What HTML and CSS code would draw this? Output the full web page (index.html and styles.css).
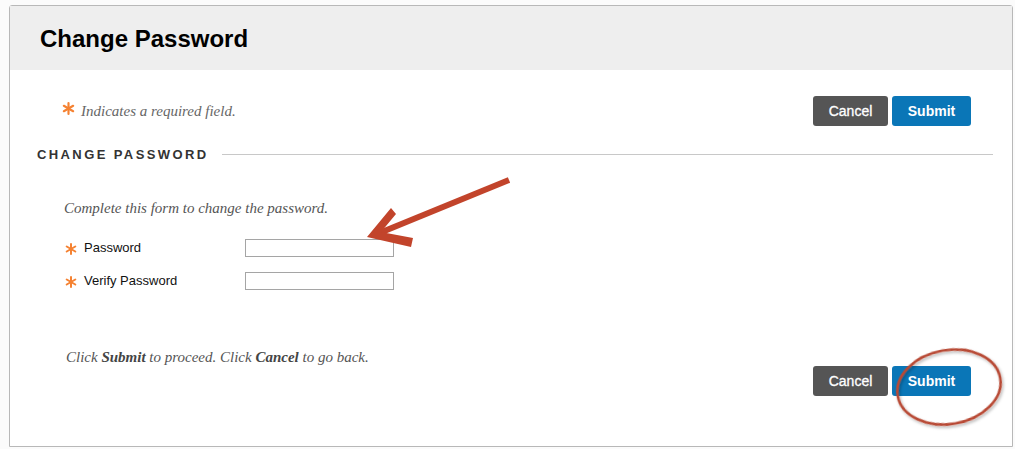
FILE: index.html
```html
<!DOCTYPE html>
<html>
<head>
<meta charset="utf-8">
<link rel="stylesheet" href="styles.css">
</head>
<body>
<div class="page">
  <div class="header"><h1 class="title">Change Password</h1></div>
  <div class="content">
    <div class="toprow">
      <div class="req">
        <svg class="star" viewBox="0 0 12 12" width="13" height="13"><g stroke="#f58232" stroke-width="2" stroke-linecap="round"><line x1="6" y1="1" x2="6" y2="11"/><line x1="1.7" y1="3.5" x2="10.3" y2="8.5"/><line x1="1.7" y1="8.5" x2="10.3" y2="3.5"/></g></svg>
        <span class="note">Indicates a required field.</span>
      </div>
      <div class="btns">
        <button class="btn cancel">Cancel</button>
        <button class="btn submit">Submit</button>
      </div>
    </div>
    <div class="section">
      <h2 class="sectitle">CHANGE PASSWORD</h2>
      <div class="rule"></div>
    </div>
    <p class="intro">Complete this form to change the password.</p>
    <div class="field">
      <div class="label"><svg class="star sm" viewBox="0 0 12 12" width="12" height="12"><g stroke="#f58232" stroke-width="2" stroke-linecap="round"><line x1="6" y1="1" x2="6" y2="11"/><line x1="1.7" y1="3.5" x2="10.3" y2="8.5"/><line x1="1.7" y1="8.5" x2="10.3" y2="3.5"/></g></svg>Password</div>
      <input class="inp" type="password">
    </div>
    <div class="field">
      <div class="label"><svg class="star sm" viewBox="0 0 12 12" width="12" height="12"><g stroke="#f58232" stroke-width="2" stroke-linecap="round"><line x1="6" y1="1" x2="6" y2="11"/><line x1="1.7" y1="3.5" x2="10.3" y2="8.5"/><line x1="1.7" y1="8.5" x2="10.3" y2="3.5"/></g></svg>Verify Password</div>
      <input class="inp" type="password">
    </div>
    <div class="bottomrow">
      <p class="proceed">Click <b>Submit</b> to proceed. Click <b>Cancel</b> to go back.</p>
      <div class="btns low">
        <button class="btn cancel">Cancel</button>
        <button class="btn submit">Submit</button>
      </div>
    </div>
  </div>
  <svg class="arrow" width="160" height="80" viewBox="0 0 160 80">
    <line x1="144" y1="4" x2="12" y2="58" stroke="#c2442b" stroke-width="6"/>
    <polygon points="2,61 26,32 31,38 16,56 48,62 46,71" fill="#c2442b"/>
  </svg>
  <svg class="ring" width="120" height="90" viewBox="0 0 120 90">
    <defs><filter id="sh" x="-20%" y="-20%" width="140%" height="140%"><feDropShadow dx="1" dy="2" stdDeviation="1.5" flood-color="#000" flood-opacity="0.3"/></filter></defs>
    <ellipse cx="59" cy="44" rx="52" ry="37" transform="rotate(-10 59 44)" fill="none" stroke="#b84a34" stroke-width="2.6" filter="url(#sh)"/>
  </svg>
</div>
</body>
</html>
```
FILE: styles.css
```css
html, body { margin: 0; padding: 0; }
body {
  width: 1015px;
  height: 449px;
  background: #fbfbfb;
  font-family: "Liberation Sans", Arial, sans-serif;
  overflow: hidden;
  position: relative;
}
.page {
  position: relative;
  margin: 5px 2px 0 9px;
  height: 442px;
  background: #fff;
  border: 1px solid #b8b8b8;
  border-radius: 3px 3px 0 0;
  box-sizing: border-box;
}
.header {
  background: #eeeeee;
  height: 64px;
  display: flex;
  align-items: center;
  padding-left: 30px;
}
.title {
  margin: 0;
  font-size: 24px;
  font-weight: bold;
  color: #000;
  padding-top: 1px;
}
.content { display: flex; flex-direction: column; }
.toprow {
  display: flex;
  justify-content: space-between;
  align-items: center;
  padding: 26px 41px 0 52px;
}
.req { display: flex; align-items: center; gap: 6px; }
.star { display: block; margin-top: -6px; }
.note, .intro, .proceed {
  font-family: "Liberation Serif", Georgia, serif;
  font-style: italic;
  font-size: 15px;
  color: #666;
}
.btns { display: flex; gap: 4px; }
.btn {
  border: none;
  border-radius: 3px;
  height: 30px;
  font-family: "Liberation Sans", Arial, sans-serif;
  font-size: 14px;
  color: #fff;
  padding: 0;
  cursor: pointer;
}
.cancel { background: #555555; width: 75px; font-weight: normal; -webkit-text-stroke: 0.3px #fff; }
.submit { background: #0a76b7; width: 79px; font-weight: bold; }
.section {
  display: flex;
  align-items: center;
  padding: 21px 19px 0 27px;
  gap: 13px;
}
.sectitle {
  margin: 0;
  font-size: 13px;
  font-weight: bold;
  letter-spacing: 2.4px;
  color: #333;
}
.rule { flex: 1; height: 1px; background: #c8c8c8; }
.intro { margin: 38px 0 0 54px; color: #555; }
.field {
  display: flex;
  align-items: center;
  margin: 22px 0 0 55px;
}
.field + .field { margin-top: 15px; }
.label {
  width: 180px;
  display: flex;
  align-items: center;
  gap: 7px;
  font-size: 13px;
  color: #111;
  margin-top: -2px;
}
.star.sm { margin-top: 4px; }
.inp {
  width: 149px;
  height: 18px;
  box-sizing: border-box;
  border: 1px solid #a5a5a5;
  margin: 0;
  padding: 0;
}
.bottomrow {
  display: flex;
  justify-content: space-between;
  align-items: flex-start;
  padding: 0 41px 0 56px;
  margin-top: 52px;
}
.proceed { margin: 7px 0 0 0; color: #555; }
.proceed b { font-weight: bold; color: #444; }
.btns.low { margin-top: 24px; }
.arrow { position: absolute; left: 355px; top: 170px; }
.ring { position: absolute; left: 880px; top: 337px; }
```
